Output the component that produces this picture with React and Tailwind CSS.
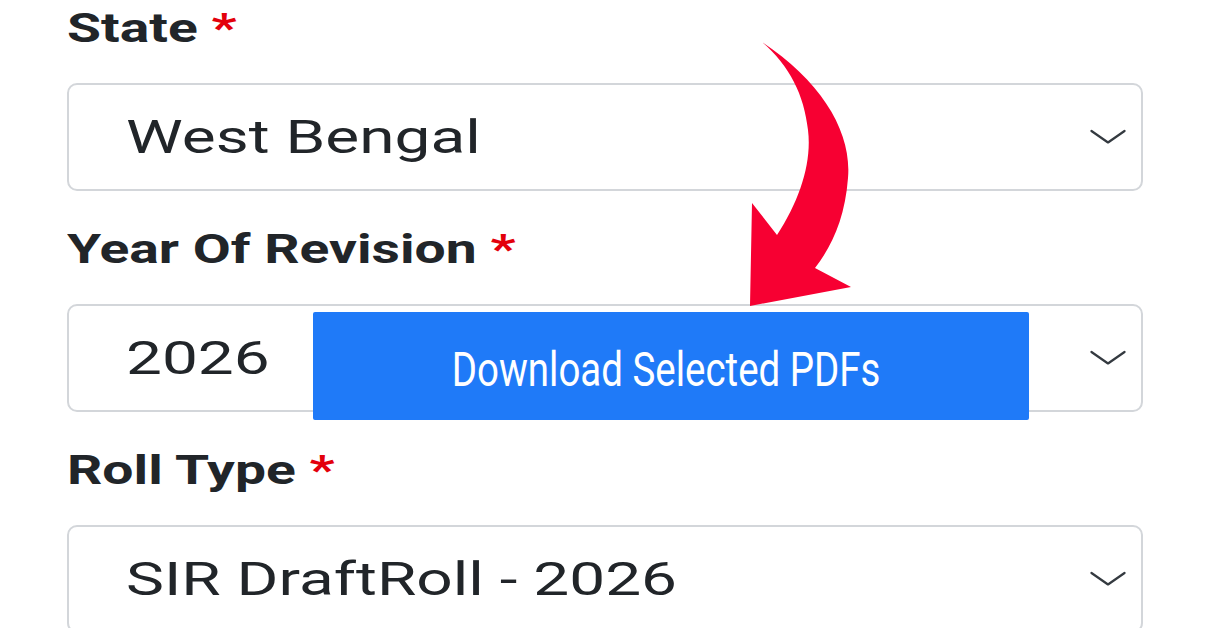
import React from "react";

const Chevron = () => (
  <svg width="36" height="16" viewBox="0 0 36 16" className="shrink-0">
    <path d="M1.5 2 L18 13.5 L34.5 2" fill="none" stroke="#343a40" strokeWidth="2.2" strokeLinecap="round" strokeLinejoin="round" />
  </svg>
);

const Label = ({ children, className = "" }) => (
  <div className={"h-[48px] leading-[48px] text-[40px] font-bold text-[#212529] " + className}>
    <span className="inline-block origin-left scale-x-[1.38] whitespace-nowrap">
      {children} <span className="text-[#e3000b]">*</span>
    </span>
  </div>
);

const SelectBox = ({ value }) => (
  <div className="flex h-[108px] items-center justify-between rounded-[10px] border-2 border-[#d3d6da] bg-white pl-[57px] pr-[15px]">
    <span className="inline-block origin-left scale-x-[1.39] whitespace-nowrap text-[46px] leading-none text-[#212529]">
      {value}
    </span>
    <Chevron />
  </div>
);

export default function App() {
  return (
    <div
      className="relative h-[628px] w-[1220px] overflow-hidden bg-white"
      style={{ fontFamily: "Roboto, 'Liberation Sans', sans-serif" }}
    >
      <div className="ml-[67px] w-[1076px] pt-[5px]">
        <Label className="mb-[30px]">State</Label>
        <SelectBox value="West Bengal" />
        <Label className="mt-[35px] mb-[30px]">Year Of Revision</Label>
        <SelectBox value="2026" />
        <Label className="mt-[35px] mb-[30px]">Roll Type</Label>
        <SelectBox value="SIR DraftRoll - 2026" />
      </div>

      <button className="absolute left-[313px] top-[312px] flex h-[108px] w-[716px] items-center justify-center rounded-[2px] bg-[#1f7af8] pr-[10px] pt-[6px]">
        <span className="inline-block scale-x-[0.785] whitespace-nowrap text-[49px] leading-none text-white">
          Download Selected PDFs
        </span>
      </button>

      <svg className="pointer-events-none absolute left-0 top-0" width="1220" height="628" viewBox="0 0 1220 628">
        <path
          d="M762 42 C 822 82 852 132 848 178 C 845 218 832 246 815 268 L 851 287 L 750 306 L 752 203 L 777 235 C 800 200 812 162 808 130 C 804 95 790 66 762 42 Z"
          fill="#f70032"
        />
      </svg>
    </div>
  );
}
